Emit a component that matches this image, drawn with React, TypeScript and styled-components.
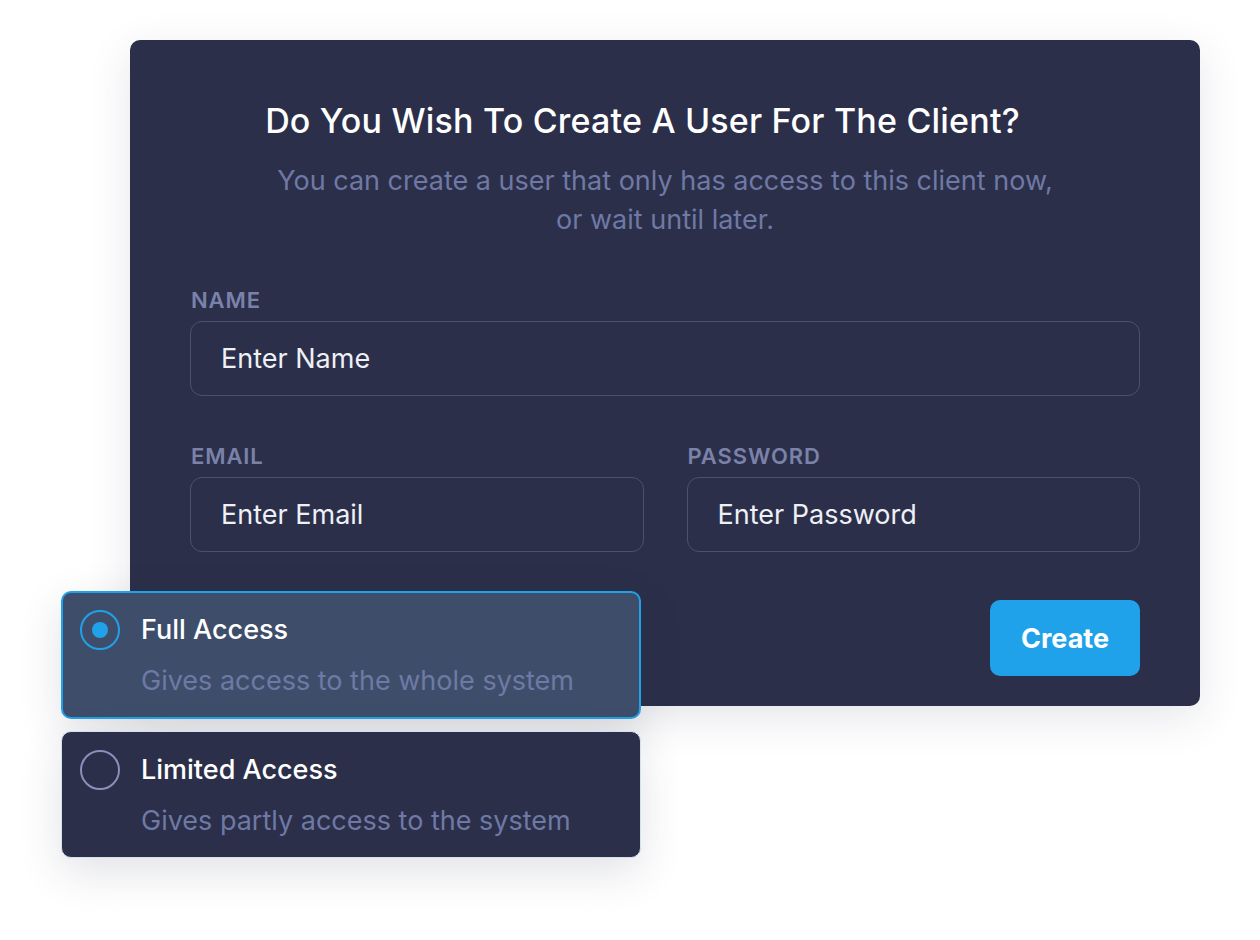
import React, { useState } from 'react';
import styled, { createGlobalStyle } from 'styled-components';

const GlobalStyle = createGlobalStyle`
  html, body {
    margin: 0;
    padding: 0;
    background: #ffffff;
  }

  body {
    font-family: Inter, "Noto Sans", sans-serif;
  }
`;

const Stage = styled.div`
  position: relative;
  width: 1260px;
  height: 940px;
  overflow: hidden;
`;

const Card = styled.div`
  margin: 40px 0 0 130px;
  width: 1070px;
  height: 666px;
  box-sizing: border-box;
  padding: 60px 60px 30px;
  background: #2b2f49;
  border-radius: 10px;
  box-shadow: 0 12px 44px rgba(40, 50, 80, 0.12);
  display: flex;
  flex-direction: column;
`;

const Title = styled.h2`
  margin: 0;
  padding-right: 45px;
  font-size: 34px;
  line-height: 42px;
  font-weight: 500;
  color: #ffffff;
  text-align: center;
  letter-spacing: 0.2px;
`;

const Subtitle = styled.p`
  margin: 19px 0 0;
  font-size: 27px;
  line-height: 39px;
  font-weight: 400;
  color: #6f79a5;
  text-align: center;
`;

const Fields = styled.div`
  margin-top: 48px;
  display: grid;
  grid-template-columns: minmax(0, 1fr) minmax(0, 1fr);
  column-gap: 43px;
  row-gap: 47px;
`;

const Field = styled.label<{ $wide?: boolean }>`
  display: flex;
  flex-direction: column;
  gap: 8px;
  min-width: 0;
  grid-column: ${(p) => (p.$wide ? '1 / -1' : 'auto')};
`;

const Label = styled.span`
  font-size: 22px;
  line-height: 26px;
  font-weight: 600;
  color: #7a82a9;
  letter-spacing: 0.9px;
  padding-left: 1px;
`;

const Input = styled.input`
  width: 100%;
  min-width: 0;
  height: 75px;
  box-sizing: border-box;
  padding: 0 30px;
  background: transparent;
  border: 1.5px solid #4a5273;
  border-radius: 12px;
  font-family: Inter, "Noto Sans", sans-serif;
  font-size: 27px;
  color: #ffffff;
  outline: none;

  &::placeholder {
    color: #eef0f6;
  }
`;

const Footer = styled.div`
  margin-top: auto;
  display: flex;
  justify-content: flex-end;
`;

const CreateButton = styled.button`
  width: 150px;
  height: 76px;
  border: none;
  border-radius: 10px;
  background: #1fa2ea;
  color: #ffffff;
  font-family: Inter, "Noto Sans", sans-serif;
  font-size: 27px;
  font-weight: 700;
  cursor: pointer;
`;

const OptionList = styled.div`
  position: absolute;
  left: 61px;
  top: 591px;
  width: 580px;
  display: flex;
  flex-direction: column;
  gap: 12px;
`;

const Option = styled.button<{ $active: boolean }>`
  height: ${(p) => (p.$active ? '128px' : '127px')};
  box-sizing: border-box;
  display: grid;
  grid-template-columns: 40px 1fr;
  grid-template-rows: 40px auto;
  column-gap: 21px;
  align-content: start;
  padding: ${(p) => (p.$active ? '17px 17px 0' : '18px 18px 0')};
  text-align: left;
  background: ${(p) => (p.$active ? '#3e4e6a' : '#2b2f49')};
  border: ${(p) => (p.$active ? '2px solid #1fa2ea' : '1px solid #d4e2ee')};
  border-radius: 10px;
  box-shadow: 0 14px 44px rgba(40, 50, 80, 0.14);
  font-family: Inter, "Noto Sans", sans-serif;
  cursor: pointer;
`;

const Radio = styled.span<{ $active: boolean }>`
  width: 40px;
  height: 40px;
  box-sizing: border-box;
  border-radius: 50%;
  border: 2px solid ${(p) => (p.$active ? '#1fa2ea' : '#8a90b9')};
  display: flex;
  align-items: center;
  justify-content: center;

  &::after {
    content: '';
    width: 16px;
    height: 16px;
    border-radius: 50%;
    background: ${(p) => (p.$active ? '#1fa2ea' : 'transparent')};
  }
`;

const OptionTitle = styled.span`
  font-size: 27px;
  line-height: 40px;
  font-weight: 500;
  color: #ffffff;
`;

const OptionText = styled.span`
  grid-column: 2;
  margin-top: 16px;
  font-size: 27px;
  line-height: 30px;
  color: #6f79a5;
  white-space: nowrap;
`;

const options = [
  { id: 'full', title: 'Full Access', text: 'Gives access to the whole system' },
  { id: 'limited', title: 'Limited Access', text: 'Gives partly access to the system' },
];

const App = () => {
  const [access, setAccess] = useState('full');

  return (
    <Stage>
      <GlobalStyle />
      <Card>
        <Title>Do You Wish To Create A User For The Client?</Title>
        <Subtitle>
          You can create a user that only has access to this client now,
          <br />
          or wait until later.
        </Subtitle>
        <Fields>
          <Field $wide>
            <Label>NAME</Label>
            <Input type="text" placeholder="Enter Name" />
          </Field>
          <Field>
            <Label>EMAIL</Label>
            <Input type="email" placeholder="Enter Email" />
          </Field>
          <Field>
            <Label>PASSWORD</Label>
            <Input type="password" placeholder="Enter Password" />
          </Field>
        </Fields>
        <Footer>
          <CreateButton type="button">Create</CreateButton>
        </Footer>
      </Card>
      <OptionList>
        {options.map((opt) => (
          <Option
            key={opt.id}
            type="button"
            $active={access === opt.id}
            onClick={() => setAccess(opt.id)}
          >
            <Radio $active={access === opt.id} />
            <OptionTitle>{opt.title}</OptionTitle>
            <OptionText>{opt.text}</OptionText>
          </Option>
        ))}
      </OptionList>
    </Stage>
  );
};

export default App;
